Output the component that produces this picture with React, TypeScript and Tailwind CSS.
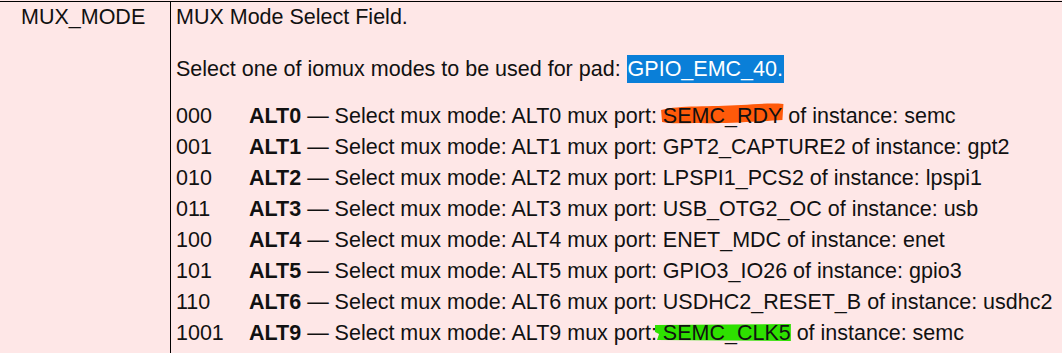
const modes = [
  { code: '000', alt: 'ALT0', port: 'SEMC_RDY', inst: 'semc', mark: 'orange' },
  { code: '001', alt: 'ALT1', port: 'GPT2_CAPTURE2', inst: 'gpt2' },
  { code: '010', alt: 'ALT2', port: 'LPSPI1_PCS2', inst: 'lpspi1' },
  { code: '011', alt: 'ALT3', port: 'USB_OTG2_OC', inst: 'usb' },
  { code: '100', alt: 'ALT4', port: 'ENET_MDC', inst: 'enet' },
  { code: '101', alt: 'ALT5', port: 'GPIO3_IO26', inst: 'gpio3' },
  { code: '110', alt: 'ALT6', port: 'USDHC2_RESET_B', inst: 'usdhc2' },
  { code: '1001', alt: 'ALT9', port: 'SEMC_CLK5', inst: 'semc', mark: 'green' },
];

// marker strokes drawn behind a port name
function Port({ name, mark }: { name: string; mark?: string }) {
  if (mark === 'orange') {
    return (
      <span className="relative inline-block">
        <svg className="absolute -left-[4px] top-[2px] h-[21px] w-[calc(100%+6px)]" viewBox="0 0 122 21" preserveAspectRatio="none">
          <path d="M2 7 C20 2 50 4 80 2 C95 1 110 0 121 1 L120 17 C100 18 70 21 40 20 C25 20 10 21 3 19 Z" fill="#ff5a0a" />
        </svg>
        <span className="relative">{name}</span>
      </span>
    );
  }
  if (mark === 'green') {
    return (
      <span className="relative inline-block">
        <svg className="absolute -left-[10px] top-[6px] h-[17px] w-[calc(100%+11px)]" viewBox="0 0 138 17" preserveAspectRatio="none">
          <path d="M2 1 L137 0 L137 17 L4 16 L6 10 L2 8 Z" fill="#2ee000" />
        </svg>
        <span className="relative">{name}</span>
      </span>
    );
  }
  return <span>{name}</span>;
}

export default function App() {
  return (
    <div className="w-[1062px] h-[353px] bg-[#fee7e7] pt-px text-[21.5px] text-[#111] overflow-hidden" style={{ fontFamily: '"Liberation Sans", Arial, sans-serif' }}>
      <div className="flex border-t border-black h-full">
        <div className="w-[171px] shrink-0 border-r border-black pl-[21px] leading-[31px]">MUX_MODE</div>
        <div className="pl-[5px] leading-[31px] whitespace-nowrap">
          <p>MUX Mode Select Field.</p>
          <p className="mt-[21px]">
            Select one of iomux modes to be used for pad:{' '}
            <span className="bg-[#0a7fd8] text-white px-[1px] py-[2px]">GPIO_EMC_40.</span>
          </p>
          <div className="mt-[16px]">
            {modes.map((m) => (
              <div key={m.code} className="flex">
                <span className="w-[73px] shrink-0">{m.code}</span>
                <span>
                  <b>{m.alt}</b> — Select mux mode: {m.alt} mux port: <Port name={m.port} mark={m.mark} /> of instance: {m.inst}
                </span>
              </div>
            ))}
          </div>
        </div>
      </div>
    </div>
  );
}
